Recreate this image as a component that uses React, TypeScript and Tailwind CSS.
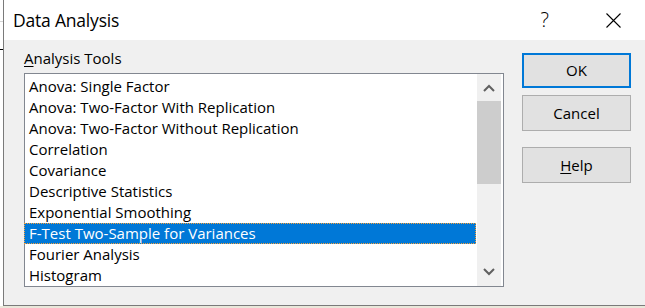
import React from 'react';

const tools = [
  'Anova: Single Factor',
  'Anova: Two-Factor With Replication',
  'Anova: Two-Factor Without Replication',
  'Correlation',
  'Covariance',
  'Descriptive Statistics',
  'Exponential Smoothing',
  'F-Test Two-Sample for Variances',
  'Fourier Analysis',
  'Histogram',
];

const font = { fontFamily: '"Open Sans", "Noto Sans", sans-serif' };

export default function App() {
  const selected = 7;

  return (
    <div className="w-[645px] h-[308px] bg-[#e9e7da] overflow-hidden" style={font}>
      <div className="h-[306px] flex bg-white">
        {/* sliver of the sheet behind */}
        <div className="w-[3px] relative">
          <div className="absolute top-[21px] left-0 w-[3px] h-px bg-[#d4d4d4]" />
          <div className="absolute top-[49px] left-0 w-[3px] h-px bg-black" />
        </div>

        <div className="flex-1 flex flex-col border-l border-b border-[#7a7a7a]">
          {/* title bar */}
          <div className="h-[40px] bg-white flex items-center text-[#000]">
            <span className="ml-[9px] text-[17.5px] tracking-[-0.2px]">Data Analysis</span>
            <span className="ml-auto mr-[57px] text-[20px] font-light">?</span>
            <svg className="mr-[24px]" width="15" height="15" viewBox="0 0 15 15">
              <path d="M0.5 0.5 L14.5 14.5 M14.5 0.5 L0.5 14.5" stroke="#000" strokeWidth="1.1" fill="none" />
            </svg>
          </div>

          {/* body */}
          <div className="flex-1 bg-[#f0f0f0] flex">
            <div className="flex flex-col">
              <div className="ml-[20px] mt-[10px] text-[15px] leading-[16px] text-black">
                <span className="underline underline-offset-2">A</span>nalysis Tools
              </div>
              <div className="ml-[20px] mt-[7px] w-[480px] h-[214px] border border-[#828790] bg-white flex">
                <div className="flex-1 pt-[2px]">
                  {tools.map((t, i) => (
                    <div
                      key={t}
                      className={
                        i === selected
                          ? 'h-[21px] flex items-center pl-[4px] text-[15px] text-white bg-[#0078d7] border border-dotted border-[#f7a13a] -ml-px mr-[1px]'
                          : 'h-[21px] flex items-center pl-[4px] text-[15px] text-black'
                      }
                    >
                      {t}
                    </div>
                  ))}
                </div>
                {/* scrollbar */}
                <div className="w-[24px] bg-[#f0f0f0] flex flex-col mr-[2px]">
                  <div className="h-[27px] flex items-center justify-center">
                    <svg width="12" height="8" viewBox="0 0 12 8">
                      <path d="M1 7 L6 2 L11 7" stroke="#606060" strokeWidth="2" fill="none" />
                    </svg>
                  </div>
                  <div className="h-[83px] bg-[#cdcdcd]" />
                  <div className="flex-1 flex items-end justify-center pb-[10px]">
                    <svg width="12" height="8" viewBox="0 0 12 8">
                      <path d="M1 1 L6 6 L11 1" stroke="#606060" strokeWidth="2" fill="none" />
                    </svg>
                  </div>
                </div>
              </div>
            </div>

            <div className="ml-[18px] mt-[13px] flex flex-col w-[109px]">
              <button className="h-[35px] bg-[#e1e1e1] border-2 border-[#0078d7] text-[15px] text-black">OK</button>
              <button className="mt-[7px] h-[36px] bg-[#e1e1e1] border border-[#adadad] text-[15px] text-black">Cancel</button>
              <button className="mt-[16px] h-[36px] bg-[#e1e1e1] border border-[#adadad] text-[15px] text-black">
                <span className="underline underline-offset-2">H</span>elp
              </button>
            </div>
          </div>
        </div>
      </div>
    </div>
  );
}
